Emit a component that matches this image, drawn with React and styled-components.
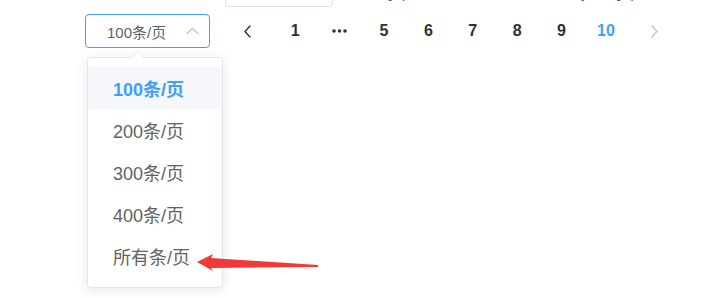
import React from 'react'
import styled, { createGlobalStyle } from 'styled-components'

const GlobalStyle = createGlobalStyle`
  html, body {
    margin: 0;
    padding: 0;
    background: #fff;
  }
  body {
    font-family: "Liberation Sans", "Noto Sans CJK SC", sans-serif;
    overflow: hidden;
  }
`

const sizes = ['100条/页', '200条/页', '300条/页', '400条/页', '所有条/页']
const pages = ['1', 'more', '5', '6', '7', '8', '9', '10']

function Chevron({ dir, color }) {
  const d = dir === 'left' ? 'M7 1L2 6.5L7 12' : dir === 'right' ? 'M1 1L6 6.5L1 12' : 'M1 6.5L6.5 1.5L12 6.5'
  const w = dir === 'up' ? 13 : 8
  const h = dir === 'up' ? 8 : 13
  return (
    <svg width={w} height={h} viewBox={`0 0 ${w} ${h}`} fill="none">
      <path d={d} stroke={color} strokeWidth="1.4" strokeLinecap="round" strokeLinejoin="round" />
    </svg>
  )
}

function MoreDots() {
  return (
    <svg width="15" height="4" viewBox="0 0 15 4">
      <circle cx="2" cy="2" r="1.8" fill="#303133" />
      <circle cx="7.5" cy="2" r="1.8" fill="#303133" />
      <circle cx="13" cy="2" r="1.8" fill="#303133" />
    </svg>
  )
}

function App() {
  return (
    <>
      <GlobalStyle />
      <Page>
        <TopStrip>
          <OldRow>
            <OldTotal>共 400 条</OldTotal>
            <OldSelect>10条/页</OldSelect>
            <OldPager>
              <span>上一页</span>
              <OldNums>
                <span>1</span><span>2</span><OldActive>3</OldActive><span>4</span><span>5</span><span>6</span>
              </OldNums>
              <span>下一页</span>
            </OldPager>
          </OldRow>
        </TopStrip>

        <Row>
          <SelectWrap>
            <SelectBox>
              <SelectText>100条/页</SelectText>
              <Chevron dir="up" color="#c0c4cc" />
            </SelectBox>
            <Dropdown>
              <PopArrow />
              {sizes.map((s, i) => (
                <Option key={s} selected={i === 0}>{s}</Option>
              ))}
            </Dropdown>
          </SelectWrap>

          <NavButton>
            <Chevron dir="left" color="#303133" />
          </NavButton>
          <Pages>
            {pages.map((p) => (
              <PageItem key={p} active={p === '10'}>
                {p === 'more' ? <MoreDots /> : p}
              </PageItem>
            ))}
          </Pages>
          <NavButton>
            <Chevron dir="right" color="#c0c4cc" />
          </NavButton>
        </Row>

        <RedArrow width="130" height="24" viewBox="0 0 130 24">
          <polygon points="0,9 16,1 14,5 121,12 121,14 14,15 16,18" fill="#f2393a" />
        </RedArrow>
      </Page>
    </>
  )
}

const Page = styled.div`
  position: relative;
  width: 719px;
  height: 298px;
  padding-left: 85px;
  box-sizing: border-box;
`

const TopStrip = styled.div`
  height: 8px;
  overflow: hidden;
`

const OldRow = styled.div`
  display: flex;
  align-items: center;
  height: 34px;
  margin-top: -27px;
  color: #303133;
`

const OldTotal = styled.span`
  margin-left: 40px;
  width: 100px;
  font-size: 18px;
  color: #606266;
`

const OldSelect = styled.div`
  box-sizing: border-box;
  width: 108px;
  height: 34px;
  border: 1px solid #dcdfe6;
  border-radius: 4px;
  padding: 0 15px;
  display: flex;
  align-items: center;
  font-size: 17px;
  color: #606266;
`

const OldPager = styled.div`
  display: flex;
  align-items: center;
  margin-left: 12px;
  font-size: 19px;
  font-weight: bold;
  letter-spacing: 2px;
`

const OldNums = styled.div`
  display: flex;
  gap: 12px;
  margin: 0 14px 0 16px;
`

const OldActive = styled.span`
  color: #409eff;
`

const Row = styled.div`
  display: flex;
  align-items: center;
  margin-top: 6px;
  height: 34px;
`

const SelectWrap = styled.div`
  position: relative;
  margin-right: 15px;
`

const SelectBox = styled.div`
  box-sizing: border-box;
  width: 125px;
  height: 34px;
  border: 1px solid #409eff;
  border-radius: 4px;
  display: flex;
  align-items: center;
  padding: 0 10px 0 21px;
  justify-content: space-between;
`

const SelectText = styled.span`
  font-size: 15px;
  color: #606266;
`

const Dropdown = styled.div`
  position: absolute;
  top: 43px;
  left: 2px;
  box-sizing: border-box;
  width: 136px;
  padding: 9px 0 10px;
  background: #fff;
  border: 1px solid #e4e7ed;
  border-radius: 4px;
  box-shadow: 0 2px 12px rgba(0, 0, 0, 0.1);
  z-index: 2;
`

const PopArrow = styled.div`
  position: absolute;
  top: -7px;
  left: 44px;
  width: 0;
  height: 0;
  border-left: 6px solid transparent;
  border-right: 6px solid transparent;
  border-bottom: 6px solid #e4e7ed;

  &::after {
    content: '';
    position: absolute;
    top: 1px;
    left: -6px;
    border-left: 6px solid transparent;
    border-right: 6px solid transparent;
    border-bottom: 6px solid #fff;
  }
`

const Option = styled.div`
  height: 42px;
  display: flex;
  align-items: center;
  padding-left: 25px;
  font-size: 18px;
  color: ${(p) => (p.selected ? '#409eff' : '#606266')};
  font-weight: ${(p) => (p.selected ? 'bold' : 'normal')};
  background: ${(p) => (p.selected ? '#f5f7fa' : 'transparent')};
`

const NavButton = styled.div`
  width: 44px;
  height: 34px;
  display: flex;
  align-items: center;
  justify-content: center;
`

const Pages = styled.div`
  display: flex;
  margin: 0 5px 0 4px;
`

const PageItem = styled.div`
  width: 44.4px;
  height: 34px;
  display: flex;
  align-items: center;
  justify-content: center;
  font-size: 16px;
  font-weight: bold;
  color: ${(p) => (p.active ? '#409eff' : '#303133')};
`

const RedArrow = styled.svg`
  position: absolute;
  left: 197px;
  top: 253px;
  z-index: 3;
`

export default App
